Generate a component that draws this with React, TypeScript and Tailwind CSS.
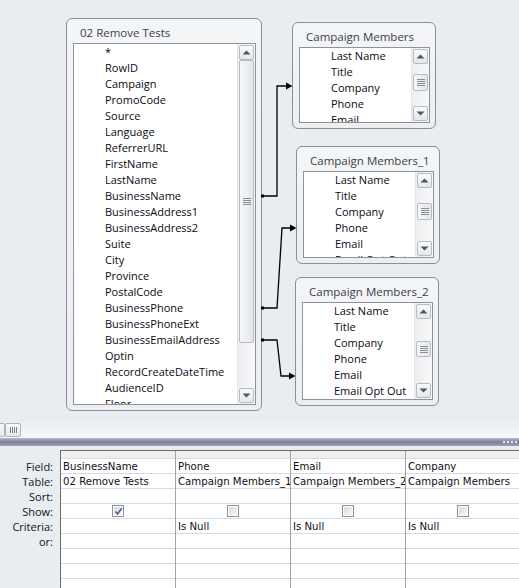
import React from "react";

const mainFields = [
  "*",
  "RowID",
  "Campaign",
  "PromoCode",
  "Source",
  "Language",
  "ReferrerURL",
  "FirstName",
  "LastName",
  "BusinessName",
  "BusinessAddress1",
  "BusinessAddress2",
  "Suite",
  "City",
  "Province",
  "PostalCode",
  "BusinessPhone",
  "BusinessPhoneExt",
  "BusinessEmailAddress",
  "Optin",
  "RecordCreateDateTime",
  "AudienceID",
  "Floor",
];

const cmFields = ["Last Name", "Title", "Company", "Phone", "Email", "Email Opt Out"];

function Arrow({ dir }: { dir: "up" | "down" }) {
  return (
    <svg width="9" height="5" viewBox="0 0 9 5">
      {dir === "up" ? (
        <polygon points="0.5,4.5 4.5,0.5 8.5,4.5" fill="#4a556e" />
      ) : (
        <polygon points="0.5,0.5 4.5,4.5 8.5,0.5" fill="#4a556e" />
      )}
    </svg>
  );
}

function ScrollBtn({ dir }: { dir: "up" | "down" }) {
  return (
    <div className="flex h-[15px] w-[15px] shrink-0 items-center justify-center rounded-[2px] border border-[#b7bbc2] bg-gradient-to-b from-[#fbfbfc] to-[#e3e6ea]">
      <Arrow dir={dir} />
    </div>
  );
}

function Grip() {
  return (
    <div className="flex flex-col gap-[1px]">
      <div className="h-[1px] w-[8px] bg-[#8a8f97]" />
      <div className="h-[1px] w-[8px] bg-[#8a8f97]" />
      <div className="h-[1px] w-[8px] bg-[#8a8f97]" />
      <div className="h-[1px] w-[8px] bg-[#8a8f97]" />
    </div>
  );
}

function ScrollBar({ thumb }: { thumb: string }) {
  return (
    <div className="flex w-[18px] shrink-0 flex-col items-center border-l border-[#e3e5e8] bg-gradient-to-r from-[#eceef0] to-[#f8f8f9] py-[1px]">
      <ScrollBtn dir="up" />
      <div className="flex w-full flex-1 flex-col items-center">
        <div
          className={
            "flex w-[15px] items-center justify-center rounded-[2px] border border-[#b7bbc2] bg-gradient-to-r from-[#f6f7f8] to-[#e4e6ea] " +
            thumb
          }
        >
          <Grip />
        </div>
      </div>
      <ScrollBtn dir="down" />
    </div>
  );
}

function FieldTable({
  pos,
  title,
  fields,
  thumb,
}: {
  pos: string;
  title: string;
  fields: string[];
  thumb: string;
}) {
  return (
    <div
      className={
        "absolute flex flex-col rounded-[6px] border border-[#8a8f98] bg-gradient-to-b from-[#f4f5f7] to-[#eceef1] " +
        pos
      }
    >
      <div className="h-[24px] shrink-0 whitespace-nowrap pl-[13px] pt-[6px] font-['Open_Sans',sans-serif] text-[11.5px] leading-[16px] text-[#3a3f48]">
        {title}
      </div>
      <div className="mb-[5px] ml-[6px] mr-[5px] flex min-h-0 flex-1 overflow-hidden border border-[#8e939b] bg-white">
        <div className="min-w-0 flex-1 overflow-hidden pl-[31px]">
          {fields.map((f) => (
            <div
              key={f}
              className="h-[16px] whitespace-nowrap font-['Open_Sans',sans-serif] text-[11px] leading-[16px] text-[#0a0a14]"
            >
              {f}
            </div>
          ))}
        </div>
        <ScrollBar thumb={thumb} />
      </div>
    </div>
  );
}

function Joins() {
  return (
    <svg
      className="pointer-events-none absolute left-0 top-0"
      width="519"
      height="422"
      viewBox="0 0 519 422"
    >
      <g fill="none" stroke="#000" strokeWidth="1.3">
        <polyline points="263,196 277,196 277,86 287,86" />
        <polyline points="263,308 277,308 282,228 291,228" />
        <polyline points="263,340 277,340 281,376 290,376" />
      </g>
      <g fill="#000">
        <rect x="261" y="194.5" width="3" height="3" />
        <rect x="261" y="306.5" width="3" height="3" />
        <rect x="261" y="338.5" width="3" height="3" />
        <polygon points="286,82.5 292.5,86 286,89.5" />
        <polygon points="290,224.5 296.5,228 290,231.5" />
        <polygon points="289,372.5 295.5,376 289,379.5" />
      </g>
    </svg>
  );
}

function CheckBox({ checked }: { checked?: boolean }) {
  return (
    <div className="relative h-[12px] w-[12px] border border-[#8f9092] bg-white p-[1px]">
      <div className="h-full w-full bg-gradient-to-br from-[#d9dadc] to-[#f7f7f8]" />
      {checked && (
        <svg className="absolute left-[1px] top-[1px]" width="9" height="9" viewBox="0 0 9 9">
          <polyline
            points="1.5,4.5 3.5,7 7.8,1.2"
            fill="none"
            stroke="#4263a0"
            strokeWidth="1.6"
          />
        </svg>
      )}
    </div>
  );
}

type Col = { field: string; table: string; checked: boolean; criteria: string };

const cols: Col[] = [
  { field: "BusinessName", table: "02 Remove Tests", checked: true, criteria: "" },
  { field: "Phone", table: "Campaign Members_1", checked: false, criteria: "Is Null" },
  { field: "Email", table: "Campaign Members_2", checked: false, criteria: "Is Null" },
  { field: "Company", table: "Campaign Members", checked: false, criteria: "Is Null" },
];

const labels = ["Field:", "Table:", "Sort:", "Show:", "Criteria:", "or:", "", "", ""];

function Cell({ children, center }: { children?: React.ReactNode; center?: boolean }) {
  return (
    <div
      className={
        center
          ? "flex h-[15px] shrink-0 items-center justify-center border-b border-[#d5dbe5]"
          : "h-[15px] shrink-0 overflow-hidden whitespace-nowrap border-b border-[#d5dbe5] pl-[2px] pt-[1px] font-['DejaVu_Sans_Condensed','DejaVu_Sans',sans-serif] text-[11.3px] leading-[14px] text-[#111118] font-stretch-condensed"
      }
    >
      {children}
    </div>
  );
}

function GridColumn({ col }: { col: Col }) {
  return (
    <div className="flex w-[115px] shrink-0 flex-col border-r border-[#a3a3a3]">
      <div className="h-[8px] shrink-0 border-b border-[#d5dbe5] bg-[#efefef]" />
      <Cell>{col.field}</Cell>
      <Cell>{col.table}</Cell>
      <Cell />
      <Cell center>
        <CheckBox checked={col.checked} />
      </Cell>
      <Cell>{col.criteria}</Cell>
      <Cell />
      <Cell />
      <Cell />
      <Cell />
    </div>
  );
}

export default function App() {
  return (
    <div className="flex h-[588px] w-[519px] flex-col overflow-hidden bg-[#e9ecf0]">
      {/* design canvas */}
      <div className="relative h-[422px] shrink-0 overflow-hidden bg-[#e9ecf0]">
        <FieldTable
          pos="left-[66px] top-[18px] w-[196px] h-[393px]"
          title="02 Remove Tests"
          fields={mainFields}
          thumb="mt-0 h-[283px]"
        />
        <FieldTable
          pos="left-[292px] top-[22px] w-[144px] h-[107px]"
          title="Campaign Members"
          fields={cmFields}
          thumb="mt-[10px] h-[17px]"
        />
        <FieldTable
          pos="left-[296px] top-[146px] w-[144px] h-[118px]"
          title="Campaign Members_1"
          fields={cmFields}
          thumb="mt-[15px] h-[17px]"
        />
        <FieldTable
          pos="left-[295px] top-[277px] w-[144px] h-[129px]"
          title="Campaign Members_2"
          fields={cmFields}
          thumb="mt-[22px] h-[16px]"
        />
        <Joins />
      </div>

      {/* horizontal scroll row */}
      <div className="flex h-[16px] shrink-0 items-start bg-gradient-to-b from-[#eceef1] to-[#f6f7f9] pt-[1px]">
        <div className="h-[14px] w-[5px] rounded-r-[2px] border border-l-0 border-[#aeb2b9] bg-gradient-to-b from-[#f8f8f9] to-[#e6e8eb]" />
        <div className="flex h-[14px] w-[16px] items-center justify-center gap-[1px] rounded-[2px] border border-[#aeb2b9] bg-gradient-to-b from-[#f8f8f9] to-[#e6e8eb]">
          <div className="h-[6px] w-[1px] bg-[#7c8189]" />
          <div className="h-[6px] w-[1px] bg-[#7c8189]" />
          <div className="h-[6px] w-[1px] bg-[#7c8189]" />
          <div className="h-[6px] w-[1px] bg-[#7c8189]" />
        </div>
      </div>

      {/* splitter band */}
      <div className="flex h-[8px] shrink-0 items-center justify-end bg-gradient-to-b from-[#b9b9c9] via-[#7f7f97] to-[#a2a2b6] pr-[2px]">
        <div className="flex gap-[2px]">
          <div className="h-[2px] w-[2px] bg-[#e8e8f0]" />
          <div className="h-[2px] w-[2px] bg-[#e8e8f0]" />
          <div className="h-[2px] w-[2px] bg-[#e8e8f0]" />
          <div className="h-[2px] w-[2px] bg-[#e8e8f0]" />
        </div>
      </div>

      {/* query grid */}
      <div className="flex min-h-0 flex-1 bg-[#e9ecf0] pt-[4px]">
        <div className="flex w-[60px] shrink-0 flex-col pr-[7px] pt-[10px]">
          {labels.map((l, i) => (
            <div
              key={i}
              className="h-[15px] shrink-0 text-right font-['Open_Sans',sans-serif] text-[11px] leading-[14px] text-[#14141c]"
            >
              {l}
            </div>
          ))}
        </div>
        <div className="flex min-w-0 flex-1 overflow-hidden border-l border-t border-[#6b6b6b] bg-white">
          {cols.map((c) => (
            <GridColumn key={c.field} col={c} />
          ))}
        </div>
      </div>
    </div>
  );
}
